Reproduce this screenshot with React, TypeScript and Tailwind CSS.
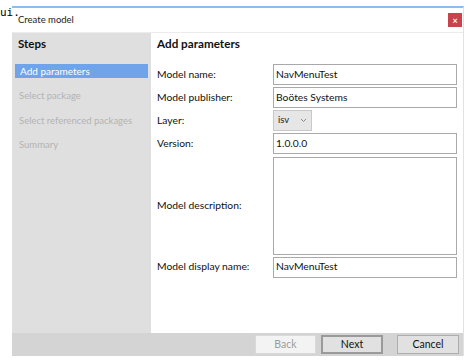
import React from "react";

const font = { fontFamily: 'Lato, "Noto Sans", sans-serif' };

function Field({ label, children, h = "h-[23px]" }: { label: string; children: React.ReactNode; h?: string }) {
  return (
    <div className={`flex items-center ${h}`}>
      <div className="w-[116px] text-[10.3px] text-[#111] whitespace-nowrap">{label}</div>
      <div className="flex-1 h-full flex items-center">{children}</div>
    </div>
  );
}

function Input({ value, cls = "h-[21px]" }: { value?: string; cls?: string }) {
  return (
    <div className={`w-[184px] ${cls} border border-[#a9a9a9] bg-white px-[2px] text-[10.3px] text-[#111] flex items-center whitespace-nowrap`}>
      {value}
    </div>
  );
}

export default function App() {
  return (
    <div className="w-[474px] h-[364px] bg-white relative overflow-hidden" style={font}>
      <div
        className="absolute left-0 top-[7px] text-[11px] leading-none text-black"
        style={{ fontFamily: '"DejaVu Sans Mono", monospace' }}
      >
        ui.
      </div>
      <div className="ml-[12px] mt-[6px] w-[452px] flex flex-col border-t-2 border-[#8dbde9] border-r border-r-[#e2e2e2]">
        <div className="h-[24px] flex items-center justify-between pl-[6px] pr-[1px]">
          <span className="text-[9.5px] text-[#222]">Create model</span>
          <div className="w-[14px] h-[14px] bg-[#c8434b] flex items-center justify-center text-white text-[9px] leading-none font-bold">
            ×
          </div>
        </div>
        <div className="flex h-[301px] border-t border-[#ececec]">
          <div className="w-[139px] bg-[#dfdfdf] flex flex-col pt-[1px]">
            <div className="pl-[6px] h-[20px] flex items-center text-[11.5px] font-bold text-[#111]">Steps</div>
            <div className="mt-[10px] mx-[3px] h-[14px] bg-[#6fa4ea] text-white text-[10px] flex items-center pl-[5px]">
              Add parameters
            </div>
            <div className="flex flex-col text-[9.5px] text-[#b3b3b3] pl-[7px] whitespace-nowrap">
              <div className="h-[24.5px] flex items-center mt-[6px]">Select package</div>
              <div className="h-[24.5px] flex items-center">Select referenced packages</div>
              <div className="h-[24.5px] flex items-center">Summary</div>
            </div>
          </div>
          <div className="flex-1 bg-white flex flex-col pl-[6px] pt-[1px]">
            <div className="h-[20px] flex items-center text-[11.7px] font-bold text-[#111]">Add parameters</div>
            <div className="flex flex-col mt-[9px]">
              <Field label="Model name:">
                <Input value="NavMenuTest" />
              </Field>
              <Field label="Model publisher:">
                <Input value="Boötes Systems" />
              </Field>
              <Field label="Layer:">
                <div className="w-[39px] h-[21px] border border-[#c8c8c8] bg-[#e6e6e6] flex items-center justify-between px-[4px] text-[9.5px] text-[#222]">
                  <span>isv</span>
                  <svg width="7" height="5" viewBox="0 0 7 5">
                    <path d="M1 1 L3.5 3.5 L6 1" stroke="#888" strokeWidth="1" fill="none" />
                  </svg>
                </div>
              </Field>
              <Field label="Version:">
                <Input value="1.0.0.0" />
              </Field>
              <Field label="Model description:" h="h-[101px]">
                <Input cls="h-[98px]" />
              </Field>
              <Field label="Model display name:" h="h-[22px]">
                <Input value="NavMenuTest" />
              </Field>
            </div>
          </div>
        </div>
        <div className="h-[23px] bg-[#d4d4d4] flex items-center justify-end gap-[5px] pr-[4px]">
          <div className="w-[61px] h-[19px] border border-[#d9d9d9] bg-[#f3f3f3] text-[10.5px] text-[#9d9d9d] flex items-center justify-center">
            Back
          </div>
          <div className="w-[62px] h-[19px] border-2 border-[#9a9a9a] bg-[#e1e1e1] text-[10.5px] text-[#111] flex items-center justify-center">
            Next
          </div>
          <div className="w-[62px] h-[19px] ml-[9px] border border-[#adadad] bg-[#e1e1e1] text-[10.5px] text-[#111] flex items-center justify-center">
            Cancel
          </div>
        </div>
      </div>
    </div>
  );
}
